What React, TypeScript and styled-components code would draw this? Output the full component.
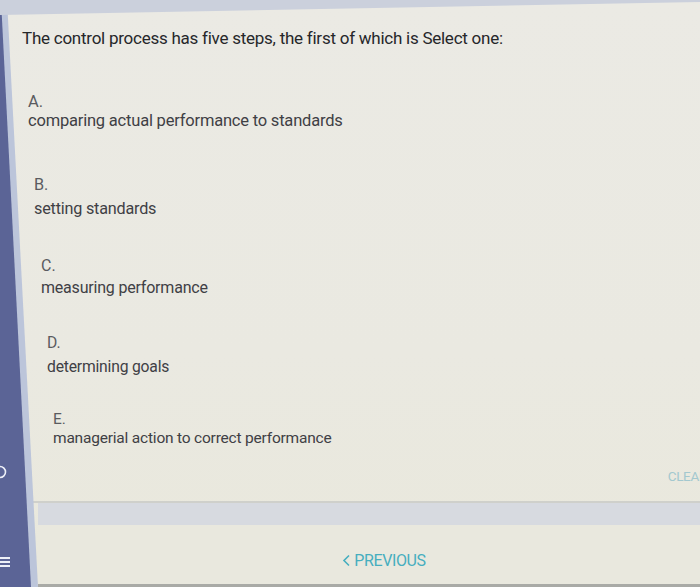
import React from "react";
import styled, { createGlobalStyle } from "styled-components";

const Global = createGlobalStyle`
  html, body { margin: 0; padding: 0; }
  body { width: 700px; height: 587px; overflow: hidden; background: #e9e8e1; font-family: Roboto, "Liberation Sans", sans-serif; }
`;

const Page = styled.div`
  width: 700px;
  height: 587px;
  overflow: hidden;
  display: grid;
  grid-template-columns: 40px 1fr;
  grid-template-rows: 587px;
  background: linear-gradient(180deg, #ebeae4 0%, #eae9e1 60%, #e9e8dc 100%);
`;

const Sidebar = styled.div`
  grid-column: 1;
  grid-row: 1;
  background: #bcc5da;
  clip-path: polygon(0 0, 7px 0, 38px 100%, 0 100%);
  display: grid;
`;

const SidebarFill = styled.div`
  background: #5b6496;
  clip-path: polygon(0 0, 1px 0, 31px 100%, 0 100%);
  display: flex;
  flex-direction: column;
  justify-content: flex-end;
  padding-bottom: 18px;
  gap: 76px;
`;

const SideIcon = styled.div`
  width: 14px;
  height: 14px;
  margin-left: -2px;
  display: flex;
  color: #eef0f8;
`;

const Main = styled.div`
  grid-column: 1 / 3;
  grid-row: 1;
  display: flex;
  flex-direction: column;
  min-width: 0;
`;

const TopBand = styled.div`
  height: 15px;
  background: #cbd0dc;
  clip-path: polygon(0 0, 100% 0, 100% 2px, 0 100%);
`;

const Card = styled.div`
  display: flex;
  flex-direction: column;
  padding-left: 22px;
  height: 488px;
  border-bottom: 2px solid #cfd0cb;
  box-sizing: border-box;
`;

const Question = styled.div`
  margin-top: 13px;
  font-size: 17px;
  line-height: 20px;
  color: #26272a;
  letter-spacing: -0.25px;
`;

const Options = styled.div`
  display: flex;
  flex-direction: column;
`;

const Option = styled.div<{ $indent: number; $size: number; $top: number; $gap: number }>`
  display: flex;
  flex-direction: column;
  margin-top: ${(p) => p.$top}px;
  gap: ${(p) => p.$gap}px;
  padding-left: ${(p) => p.$indent}px;
  font-size: ${(p) => p.$size}px;
`;

const Label = styled.div`
  line-height: 18px;
  color: #5a5b60;
`;

const Answer = styled.div`
  line-height: 20px;
  color: #3f4045;
  letter-spacing: -0.2px;
`;

const ClearRow = styled.div`
  margin-top: 20px;
  display: flex;
  justify-content: flex-end;
  margin-right: -7px;
`;

const Clear = styled.span`
  font-size: 13.5px;
  color: #a3c8cf;
  letter-spacing: -0.3px;
`;

const Gap = styled.div`
  height: 22px;
  margin-left: 38px;
  background: #d7dae0;
`;

const Footer = styled.div`
  flex: 1;
  margin-left: 38px;
  display: flex;
  align-items: center;
  justify-content: center;
  padding-left: 30px;
  padding-top: 12px;
  background: #e9e8de;
  border-bottom: 3px solid #a9aaa6;
`;

const Prev = styled.span`
  display: flex;
  align-items: center;
  gap: 3px;
  font-size: 16px;
  color: #46aebf;
  letter-spacing: -0.4px;
`;

const options = [
  { l: "A.", t: "comparing actual performance to standards", i: 6, s: 16.5, top: 45, g: -1 },
  { l: "B.", t: "setting standards", i: 12, s: 16.2, top: 45, g: 5 },
  { l: "C.", t: "measuring performance", i: 19, s: 16, top: 38, g: 3 },
  { l: "D.", t: "determining goals", i: 25, s: 15.7, top: 36, g: 5 },
  { l: "E.", t: "managerial action to correct performance", i: 31, s: 15.5, top: 33, g: 0 },
];

export default function App() {
  return (
    <>
      <Global />
      <Page>
        <Sidebar>
          <SidebarFill>
            <SideIcon>
              <svg width="14" height="14" viewBox="0 0 14 14" fill="none" stroke="currentColor" strokeWidth="1.6">
                <circle cx="2" cy="7" r="5.5" />
              </svg>
            </SideIcon>
            <SideIcon>
              <svg width="14" height="14" viewBox="0 0 14 14" fill="none" stroke="currentColor" strokeWidth="1.8">
                <path d="M0 3h12M0 7h12M0 11h12" />
              </svg>
            </SideIcon>
          </SidebarFill>
        </Sidebar>
        <Main>
          <TopBand />
          <Card>
            <Question>The control process has five steps, the first of which is Select one:</Question>
            <Options>
              {options.map((o) => (
                <Option key={o.l} $indent={o.i} $size={o.s} $top={o.top} $gap={o.g}>
                  <Label>{o.l}</Label>
                  <Answer>{o.t}</Answer>
                </Option>
              ))}
            </Options>
            <ClearRow>
              <Clear>CLEAR</Clear>
            </ClearRow>
          </Card>
          <Gap />
          <Footer>
            <Prev>
              <svg width="9" height="13" viewBox="0 0 9 13" fill="none" stroke="currentColor" strokeWidth="1.6">
                <path d="M7 1.5L2 6.5l5 5" />
              </svg>
              PREVIOUS
            </Prev>
          </Footer>
        </Main>
      </Page>
    </>
  );
}
